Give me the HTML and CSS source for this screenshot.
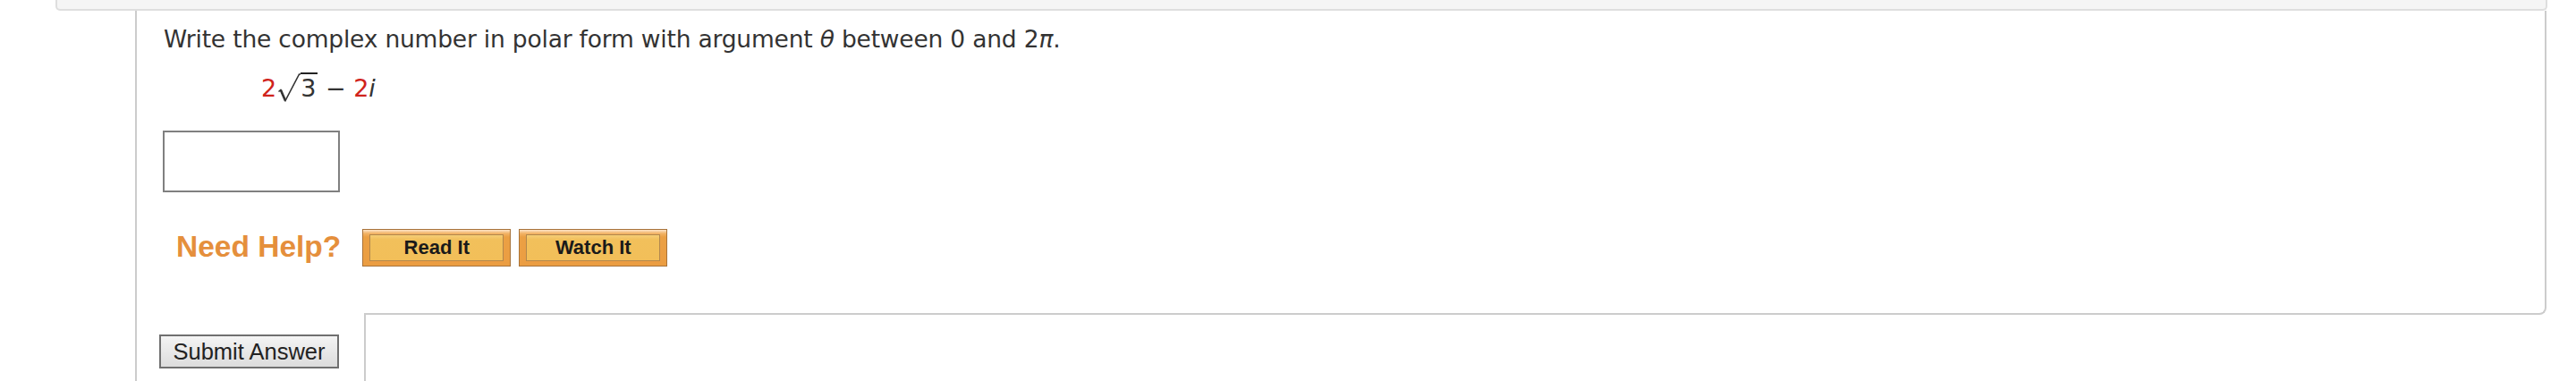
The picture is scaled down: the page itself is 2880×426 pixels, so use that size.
FILE: index.html
```html
<!DOCTYPE html>
<html>
<head>
<meta charset="utf-8">
<link rel="stylesheet" href="styles.css">
</head>
<body>
<div class="prev"></div>
<div class="question">
  <div class="body">
    <div class="prompt">Write the complex number in polar form with argument <i>&theta;</i> between 0 and 2<i>&pi;</i>.</div>
    <div class="math"><span class="red">2</span><svg class="radical" width="25" height="33" viewBox="0 0 25 33"><path d="M0.5 21.5 L2.8 19.6 L8 31.5 L23.5 2 L25 2" fill="none" stroke="#333" stroke-width="1.6" stroke-linejoin="miter"/><path d="M2.8 19.6 L8 31.5" fill="none" stroke="#333" stroke-width="2.6"/></svg><span class="radicand">3</span> &minus; <span class="red">2</span><i>i</i></div>
    <div class="answer"></div>
    <div class="help">
      <span class="need">Need Help?</span>
      <span class="hbtn"><span class="hbtn-in">Read It</span></span>
      <span class="hbtn"><span class="hbtn-in">Watch It</span></span>
    </div>
  </div>
  <div class="footer">
    <div class="submit-col"><button class="submit">Submit Answer</button></div>
    <div class="panel"></div>
  </div>
</div>
</body>
</html>
```
FILE: styles.css
```css
html, body {
  margin: 0;
  padding: 0;
  background: #fff;
}
body {
  width: 2880px;
  overflow: hidden;
  font-family: "DejaVu Sans", Verdana, sans-serif;
  color: #333;
}
.prev {
  margin-left: 62px;
  width: 2786px;
  height: 12px;
  box-sizing: border-box;
  background: #f5f5f5;
  border: 2px solid #dedede;
  border-top: none;
  border-radius: 0 0 5px 5px;
}
.question {
  margin-left: 151px;
  width: 2696px;
  box-sizing: border-box;
  border-left: 2px solid #cccccc;
}
.body {
  border-right: 2px solid #cccccc;
  border-bottom: 2px solid #cccccc;
  border-bottom-right-radius: 8px;
  padding: 14px 0 52px 0;
}
.prompt {
  font-size: 26.5px;
  letter-spacing: -0.2px;
  line-height: 36px;
  padding-left: 30px;
  color: #333;
}
.math {
  margin-top: 19px;
  font-size: 27px;
  line-height: 36px;
  padding-left: 139px;
  color: #333;
  white-space: pre;
}
.red {
  color: #d0231c;
}
.radical {
  vertical-align: -6px;
  margin-left: 2px;
}
.radicand {
  border-top: 2px solid #222;
  padding-right: 2px;
}
.answer {
  margin-top: 29px;
  margin-left: 29px;
  width: 198px;
  height: 69px;
  box-sizing: border-box;
  border: 2px solid #808080;
  background: #fff;
}
.help {
  margin-top: 41px;
  display: flex;
  align-items: flex-start;
  height: 42px;
}
.need {
  margin-left: 44px;
  font-family: "Liberation Sans", Arial, sans-serif;
  font-weight: bold;
  font-size: 33.5px;
  line-height: 40px;
  color: #e58f3c;
  margin-right: 24px;
}
.hbtn {
  display: block;
  width: 166px;
  height: 42px;
  box-sizing: border-box;
  border: 1px solid #a8733a;
  padding: 5px 7px;
  background: linear-gradient(to bottom, #fde4c8 0px, #f2b366 4px, #eba044 8px, #eb9d42 100%);
  margin-right: 9px;
}
.hbtn-in {
  display: block;
  height: 30px;
  box-sizing: border-box;
  border: 1px solid #b2874d;
  background: linear-gradient(to bottom, #f5cd77 0px, #f2c05b 5px, #f2bf59 100%);
  font-family: "Liberation Sans", Arial, sans-serif;
  font-weight: bold;
  font-size: 22px;
  line-height: 28px;
  text-align: center;
  color: #1a1a1a;
}
.footer {
  display: flex;
  height: 74px;
}
.submit-col {
  width: 254px;
  flex: none;
  margin-top: -2px;
  padding-top: 24px;
  background: #fff;
}
.submit {
  display: block;
  margin: 0 0 0 25px;
  width: 201px;
  height: 38px;
  box-sizing: border-box;
  border: 2px solid #707070;
  border-radius: 0;
  background: linear-gradient(to bottom, #f4f4f4, #dcdcdc);
  font-family: "Liberation Sans", Arial, sans-serif;
  font-size: 25.5px;
  line-height: 32px;
  color: #222;
  padding: 0;
}
.panel {
  flex: 1;
  border-left: 2px solid #cccccc;
}
```
